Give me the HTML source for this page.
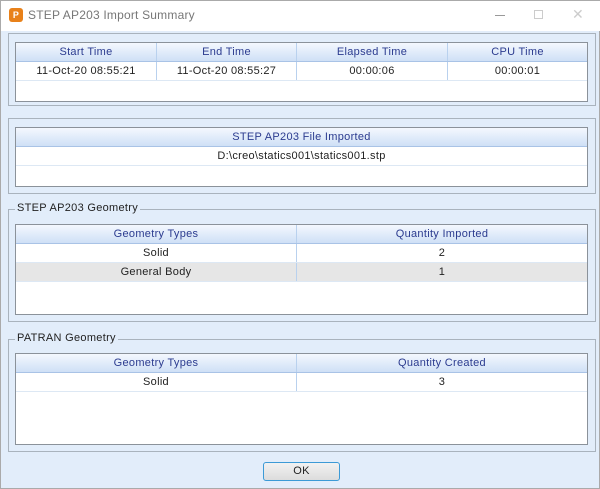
<!DOCTYPE html>
<html><head><style>
*{box-sizing:border-box;margin:0;padding:0}
body{width:600px;height:489px;background:#e2edfa;font-family:"Liberation Sans",sans-serif;font-size:11px;letter-spacing:0.3px;color:#222;position:relative;overflow:hidden;border:1px solid #aaa}
.title{position:absolute;left:0;top:0;width:600px;height:30px;background:#fff;}
.title span{position:absolute;left:27px;top:7px;font-size:12px;color:#777;letter-spacing:0.2px}
.icon{position:absolute;left:8px;top:7px;width:14px;height:14px;background:#e8811a;border-radius:3px;color:#fff;font-size:9px;font-weight:bold;text-align:center;line-height:14px}
.grp{position:absolute;left:7px;width:588px;border:1px solid #a9b3bd;}
.lbl{position:absolute;top:-8px;left:6px;background:#e2edfa;padding:0 2px;font-size:11px;color:#222}
.tbl{position:absolute;left:14px;width:573px;background:#fff;border:1px solid #8b929a}
.hd{display:flex;height:19px;background:linear-gradient(#f4f8fe,#cfe0f6);border-bottom:1px solid #a9c3e6}
.hd div,.rw div{flex:1;text-align:center;line-height:18px;border-right:1px solid #b9d1ee}
.hd div{color:#2b3b8f}
.hd div:last-child,.rw div:last-child{border-right:none}
.rw{display:flex;height:19px;border-bottom:1px solid #dde8f4}
.g{background:#e6e6e6}
.ok{position:absolute;left:262px;top:461px;width:77px;height:19px;border:1px solid #3c9ad6;border-radius:3px;background:linear-gradient(#f2f2f2,#dcdcdc);text-align:center;line-height:17px;font-size:11px}
</style></head><body>
<div class="title"><div class="icon">P</div><span>STEP AP203 Import Summary</span>
<div style="position:absolute;left:494px;top:14px;width:10px;height:1px;background:#999"></div>
<div style="position:absolute;left:533px;top:9px;width:9px;height:9px;border:1px solid #ccc"></div>
<div style="position:absolute;left:571px;top:5px;color:#ccc;font-size:14px">✕</div></div>
<div class="grp" style="top:32px;height:73px"></div>
<div class="tbl" style="top:41px;height:60px">
<div class="hd"><div style="flex:0 0 141px">Start Time</div><div style="flex:0 0 140px">End Time</div><div style="flex:0 0 151px">Elapsed Time</div><div>CPU Time</div></div>
<div class="rw"><div style="flex:0 0 141px">11-Oct-20 08:55:21</div><div style="flex:0 0 140px">11-Oct-20 08:55:27</div><div style="flex:0 0 151px">00:00:06</div><div>00:00:01</div></div></div>
<div class="grp" style="top:117px;height:76px"></div>
<div class="tbl" style="top:126px;height:60px">
<div class="hd"><div>STEP AP203 File Imported</div></div>
<div class="rw"><div>D:\creo\statics001\statics001.stp</div></div></div>
<div class="grp" style="top:208px;height:113px"><div class="lbl">STEP AP203 Geometry</div></div>
<div class="tbl" style="top:223px;height:91px">
<div class="hd"><div style="flex:0 0 281px">Geometry Types</div><div>Quantity Imported</div></div>
<div class="rw"><div style="flex:0 0 281px">Solid</div><div>2</div></div>
<div class="rw g"><div style="flex:0 0 281px">General Body</div><div>1</div></div></div>
<div class="grp" style="top:338px;height:113px"><div class="lbl">PATRAN Geometry</div></div>
<div class="tbl" style="top:352px;height:92px">
<div class="hd"><div style="flex:0 0 281px">Geometry Types</div><div>Quantity Created</div></div>
<div class="rw"><div style="flex:0 0 281px">Solid</div><div>3</div></div></div>
<div class="ok">OK</div>
</body></html>
